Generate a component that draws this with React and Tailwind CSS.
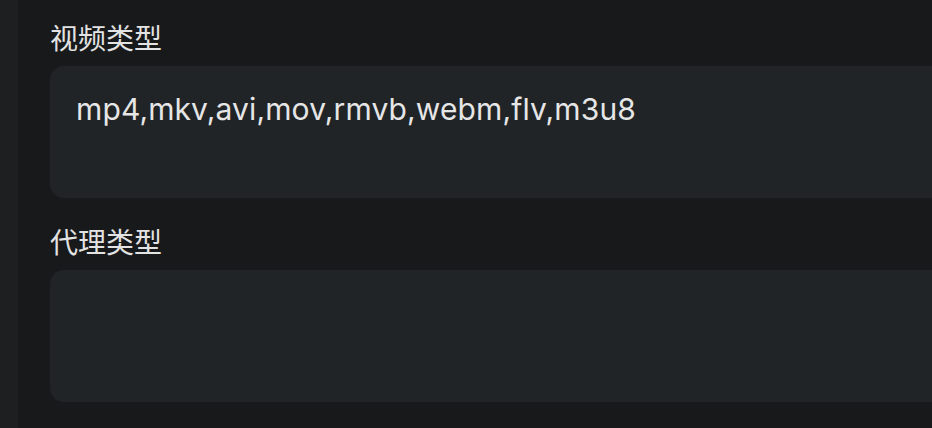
import React from 'react';

const Field = ({ label, value }) => (
  <div className="flex flex-col">
    <label className="text-[28px] leading-[28px] text-[#e3e3e3] mb-[13px]">{label}</label>
    <div className="h-[132px] -mr-[20px] rounded-[14px] bg-[#212426] px-[26px] pt-[21px]">
      <span className="text-[30px] leading-[44px] tracking-[0.12px] text-[#e6e6e6]">{value}</span>
    </div>
  </div>
);

export default function App() {
  return (
    <div
      className="flex w-[932px] h-[428px] overflow-hidden bg-[#18191b]"
      style={{ fontFamily: 'Inter, "Noto Sans CJK SC", sans-serif' }}
    >
      <div className="w-[18px] shrink-0 bg-[#1d1f21]" />
      <div className="flex-1 flex flex-col gap-[31px] pl-[32px] pt-[25px] min-w-0">
        <Field label="视频类型" value="mp4,mkv,avi,mov,rmvb,webm,flv,m3u8" />
        <Field label="代理类型" value="" />
      </div>
    </div>
  );
}
